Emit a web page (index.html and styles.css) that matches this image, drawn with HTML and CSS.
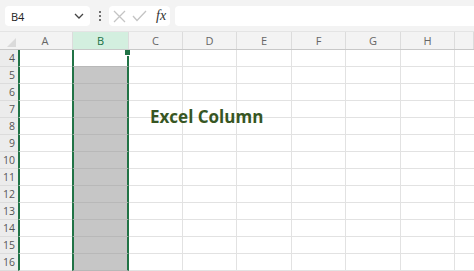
FILE: index.html
```html
<!DOCTYPE html>
<html lang="en">
<head>
    <meta charset="UTF-8">
    <title>Excel Column</title>
    <link rel="stylesheet" href="styles.css">
</head>
<body>
    <div class="toolbar">
        <div class="namebox">
            <span>B4</span>
            <svg width="10" height="6" viewBox="0 0 10 6"><path d="M1 1 L5 5 L9 1" fill="none" stroke="#444" stroke-width="1.3"/></svg>
        </div>
        <div class="dots"><i></i><i></i><i></i></div>
        <div class="fxbox">
            <svg width="13" height="13" viewBox="0 0 13 13"><path d="M1 1 L12 12 M12 1 L1 12" stroke="#c4c4c4" stroke-width="1.3"/></svg>
            <svg width="15" height="12" viewBox="0 0 15 12"><path d="M1 6 L5 10.5 L14 1" fill="none" stroke="#c4c4c4" stroke-width="1.3"/></svg>
            <span class="fx">fx</span>
        </div>
        <div class="formula"></div>
    </div>

    <div class="sheet">
        <div class="row head">
            <div class="rh corner"></div>
            <div class="c w55">A</div>
            <div class="c w56 sel">B</div>
            <div class="c w54">C</div>
            <div class="c w54">D</div>
            <div class="c w55">E</div>
            <div class="c w54">F</div>
            <div class="c w55">G</div>
            <div class="c w54">H</div>
            <div class="c rest"></div>
        </div>
        <div id="rows"></div>
        <div class="label">Excel Column</div>
    </div>

    <script>
        var rows = document.getElementById("rows");
        var widths = [54, 54, 55, 54, 55, 54];
        for (var n = 4; n <= 16; n++) {
            var html = '<div class="row"><div class="rh">' + n + '</div>';
            html += '<div class="c w55 a"></div>';
            html += '<div class="c b' + (n == 4 ? ' active' : '') + '"></div>';
            for (var k = 0; k < widths.length; k++) {
                html += '<div class="c w' + widths[k] + '"></div>';
            }
            rows.innerHTML += html + '<div class="c rest"></div></div>';
        }
    </script>
</body>
</html>
```

FILE: styles.css
```css
* {
    margin: 0;
    padding: 0;
    box-sizing: border-box;
}

body {
    width: 474px;
    height: 271px;
    overflow: hidden;
    background: #fff;
    font-family: "Open Sans", "Noto Sans", sans-serif;
}

.toolbar {
    height: 32px;
    background: #f3f3f3;
    display: flex;
    align-items: flex-start;
    padding: 6px 0 0 5px;
    border-bottom: 1px solid #e4e4e4;
}

.namebox {
    width: 85px;
    height: 20px;
    background: #fff;
    border-radius: 4px;
    display: flex;
    align-items: center;
    justify-content: space-between;
    padding: 0 6px 0 6px;
    font-size: 11px;
    color: #222;
}

.dots {
    width: 19px;
    height: 20px;
    display: flex;
    flex-direction: column;
    align-items: center;
    justify-content: center;
    gap: 2px;
}

.dots i {
    width: 2px;
    height: 2px;
    background: #444;
    border-radius: 1px;
}

.fxbox {
    width: 61px;
    height: 20px;
    background: #fff;
    border-radius: 4px;
    display: flex;
    align-items: center;
    gap: 6px;
    padding-left: 4px;
}

.fx {
    font-family: "Liberation Serif", serif;
    font-style: italic;
    font-size: 14px;
    color: #333;
    margin-left: 3px;
}

.formula {
    flex: 1;
    height: 20px;
    margin-left: 5px;
    background: #fff;
    border-radius: 4px 0 0 4px;
}

.sheet {
    position: relative;
    overflow: hidden;
}

.row {
    display: flex;
    height: 17px;
    overflow: hidden;
}

.row.head {
    height: 18px;
    background: #f3f3f3;
    border-bottom: 1px solid #c8c8c8;
}

.rh {
    width: 18px;
    flex: none;
    background: #ececec;
    border-bottom: 1px solid #dcdcdc;
    font-size: 10.5px;
    color: #555;
    text-align: right;
    padding-right: 3px;
    line-height: 16px;
}

.rh.corner {
    background: #f3f3f3;
    border-bottom: none;
    position: relative;
}

.rh.corner::after {
    content: "";
    position: absolute;
    right: 2px;
    bottom: 2px;
    border-left: 9px solid transparent;
    border-bottom: 9px solid #dadada;
}

.c {
    flex: none;
    border-right: 1px solid #e2e2e2;
    border-bottom: 1px solid #e2e2e2;
}

.w54 { width: 54px; }
.w55 { width: 55px; }
.w56 { width: 56px; }

.c.rest {
    flex: 1;
    border-right: none;
}

.head .c {
    border-bottom: none;
    border-right: 1px solid #dcdcdc;
    text-align: center;
    font-size: 11px;
    color: #666;
    line-height: 17px;
}

.head .c.sel {
    background: #d3efdf;
    color: #217346;
}

.c.a {
    border-left: 2px solid #217346;
}

.c.b {
    width: 57px;
    background: #c6c6c6;
    border-left: 2px solid #217346;
    border-right: 2px solid #217346;
    border-bottom-color: #b8b8b8;
    margin-left: -1px;
}

.c.b.active {
    background: #fff;
    position: relative;
}

.c.b.active::after {
    content: "";
    position: absolute;
    right: -4px;
    top: -1px;
    width: 5px;
    height: 5px;
    background: #217346;
    border: 1px solid #fff;
}

.label {
    position: absolute;
    left: 150px;
    top: 73px;
    font-family: "Open Sans", sans-serif;
    font-weight: 700;
    font-size: 17px;
    color: #375623;
}
```
